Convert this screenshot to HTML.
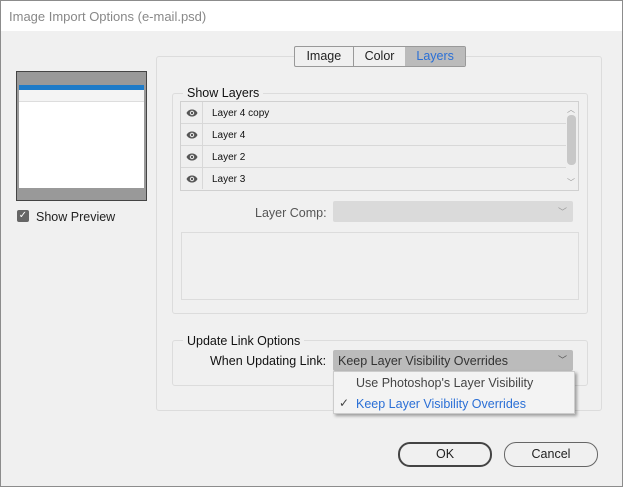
<!DOCTYPE html><html><head><style>
body{margin:0;width:623px;height:487px;overflow:hidden;font-family:"Liberation Sans",sans-serif;font-size:12px;color:#222;}
.win{position:absolute;left:0;top:0;width:621px;height:485px;border:1px solid #8c8c8c;background:#f0f0f0;}
.a{position:absolute;}
.t{font-size:12.5px}
.row{height:21px;border-bottom:1px solid #d8d8d8;display:flex;line-height:24px}
.eye{width:21px;border-right:1px solid #d8d8d8;display:flex;align-items:center;justify-content:center}
</style></head><body>
<svg width="0" height="0" style="position:absolute"><defs><symbol id="e" viewBox="0 0 12 8"><path d="M0.5 4C2 1.2 4 0.5 6 0.5S10 1.2 11.5 4C10 6.8 8 7.5 6 7.5S2 6.8 0.5 4Z" fill="#555"/><circle cx="6" cy="4" r="2.2" fill="#eee"/><circle cx="6" cy="4" r="1.2" fill="#555"/></symbol></defs></svg>
<div class="win">
<div class="a" style="left:0;top:0;width:621px;height:30px;background:#fff"></div>
<div class="a t" style="left:8px;top:8px;font-size:13px;color:#888">Image Import Options (e-mail.psd)</div>
<div class="a" style="left:15px;top:70px;width:129px;height:128px;border:1px solid #444;background:#999"></div>
<div class="a" style="left:18px;top:84px;width:125px;height:103px;background:#fff"></div>
<div class="a" style="left:18px;top:84px;width:125px;height:5px;background:#1e7bc8"></div>
<div class="a" style="left:18px;top:89px;width:125px;height:11px;background:#f4f4f4;border-bottom:1px solid #ddd"></div>
<div class="a" style="left:16px;top:209px;width:12px;height:12px;background:#666;border-radius:2px;color:#fff;font-size:10px;line-height:12px;text-align:center">✓</div>
<div class="a t" style="left:35px;top:209px">Show Preview</div>
<div class="a" style="left:155px;top:55px;width:444px;height:353px;border:1px solid #dcdcdc;border-radius:3px"></div>
<div class="a" style="left:293px;top:45px;width:170px;height:19px;border:1px solid #999;border-radius:2px;background:#f0f0f0;display:flex;font-size:12.5px;line-height:19px;text-align:center">
<div style="width:58px;border-right:1px solid #999">Image</div><div style="width:52px">Color</div><div style="width:60px;background:#bbb;color:#2a6fd6">Layers</div></div>
<div class="a" style="left:171px;top:92px;width:414px;height:219px;border:1px solid #dcdcdc;border-radius:3px"></div>
<div class="a t" style="left:182px;top:85px;padding:0 4px;background:#f0f0f0;color:#111">Show Layers</div>
<div class="a" style="left:179px;top:100px;width:397px;height:88px;border:1px solid #d0d0d0;background:#efefef"></div>
<div class="a" style="left:180px;top:101px;width:385px;font-size:10px;color:#111">
<div class="row"><div class="eye"><svg width="12" height="8"><use href="#e"/></svg></div><div style="padding-left:9px">Layer 4 copy</div></div>
<div class="row"><div class="eye"><svg width="12" height="8"><use href="#e"/></svg></div><div style="padding-left:9px">Layer 4</div></div>
<div class="row"><div class="eye"><svg width="12" height="8"><use href="#e"/></svg></div><div style="padding-left:9px">Layer 2</div></div>
<div class="row" style="border:0"><div class="eye"><svg width="12" height="8"><use href="#e"/></svg></div><div style="padding-left:9px">Layer 3</div></div>
</div>
<div class="a" style="left:566px;top:114px;width:9px;height:50px;background:#c8c8c8;border-radius:4px"></div>
<div class="a" style="left:566px;top:103px;font-size:8px;color:#999">︿</div>
<div class="a" style="left:566px;top:176px;font-size:8px;color:#999">﹀</div>
<div class="a t" style="left:254px;top:205px;color:#555">Layer Comp:</div>
<div class="a" style="left:332px;top:200px;width:240px;height:21px;background:#dadada;border-radius:2px"></div>
<div class="a" style="left:557px;top:204px;font-size:9px;color:#999">﹀</div>
<div class="a" style="left:180px;top:231px;width:396px;height:66px;border:1px solid #dcdcdc"></div>
<div class="a" style="left:171px;top:339px;width:414px;height:44px;border:1px solid #dcdcdc;border-radius:3px"></div>
<div class="a t" style="left:182px;top:333px;padding:0 4px;background:#f0f0f0;color:#111">Update Link Options</div>
<div class="a t" style="left:209px;top:353px;color:#111">When Updating Link:</div>
<div class="a" style="left:332px;top:349px;width:240px;height:21px;background:#bbb;border-radius:2px"></div>
<div class="a t" style="left:337px;top:353px;color:#333">Keep Layer Visibility Overrides</div>
<div class="a" style="left:557px;top:352px;font-size:9px;color:#555">﹀</div>
<div class="a" style="left:332px;top:370px;width:240px;height:41px;background:#f3f3f3;border:1px solid #ccc;box-shadow:2px 2px 3px rgba(0,0,0,.35)"></div>
<div class="a t" style="left:355px;top:375px;color:#444">Use Photoshop's Layer Visibility</div>
<div class="a" style="left:338px;top:395px;font-size:12px;color:#444">✓</div>
<div class="a t" style="left:355px;top:396px;color:#2a6fd6">Keep Layer Visibility Overrides</div>
<div class="a t" style="left:397px;top:441px;width:90px;height:21px;border:2px solid #444;border-radius:12px;text-align:center;line-height:21px">OK</div>
<div class="a t" style="left:503px;top:441px;width:92px;height:23px;border:1px solid #666;border-radius:12px;text-align:center;line-height:23px">Cancel</div>
</div>
</body></html>
